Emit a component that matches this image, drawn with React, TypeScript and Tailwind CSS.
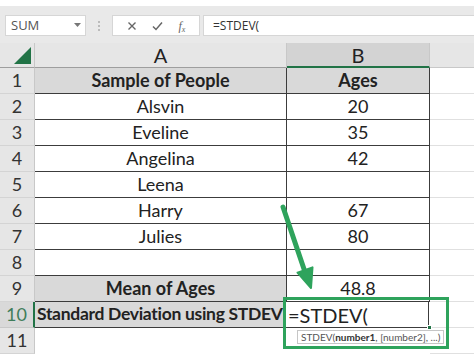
import React from "react";

type Row = {
  n: string;
  a: string;
  b: string;
  aBold?: boolean;
  bBold?: boolean;
  aGray?: boolean;
  bGray?: boolean;
  aLeft?: boolean;
  formula?: boolean;
  sel?: boolean;
  last?: boolean;
};

const rows: Row[] = [
  { n: "1", a: "Sample of People", b: "Ages", aBold: true, bBold: true, aGray: true, bGray: true },
  { n: "2", a: "Alsvin", b: "20" },
  { n: "3", a: "Eveline", b: "35" },
  { n: "4", a: "Angelina", b: "42" },
  { n: "5", a: "Leena", b: "" },
  { n: "6", a: "Harry", b: "67" },
  { n: "7", a: "Julies", b: "80" },
  { n: "8", a: "", b: "" },
  { n: "9", a: "Mean of Ages", b: "48.8", aBold: true, aGray: true },
  { n: "10", a: "Standard Deviation using STDEV", b: "=STDEV(", aBold: true, aGray: true, aLeft: true, formula: true, sel: true },
  { n: "11", a: "", b: "", last: true },
];

export default function App() {
  const font = { fontFamily: "Lato, 'Open Sans', sans-serif" };
  return (
    <div className="relative w-[474px] h-[354px] overflow-hidden bg-white text-[#222]" style={font}>
      {/* toolbar */}
      <div className="h-[6px] bg-white" />
      <div className="h-[37px] bg-[#e9e9e9] flex items-start pt-[9px]">
        <div className="ml-[5px] w-[81px] h-[21px] bg-white border border-[#d6d6d6] flex items-center justify-between pl-[5px] pr-[4px]">
          <span className="text-[13px] text-[#555]" style={{ fontFamily: "'Open Sans', sans-serif" }}>SUM</span>
          <svg width="7" height="5" viewBox="0 0 7 5"><path d="M0 0 L7 0 L3.5 4 Z" fill="#777" /></svg>
        </div>
        <div className="w-[26px] h-[21px] flex flex-col items-center justify-center gap-[2px]">
          <span className="w-[2px] h-[2px] bg-[#bbb]" />
          <span className="w-[2px] h-[2px] bg-[#bbb]" />
          <span className="w-[2px] h-[2px] bg-[#bbb]" />
        </div>
        <div className="w-[88px] h-[21px] bg-white border border-[#d6d6d6] flex items-center justify-around px-[6px]">
          <svg width="10" height="10" viewBox="0 0 10 10"><path d="M1.5 1.5 L8.5 8.5 M8.5 1.5 L1.5 8.5" stroke="#666" strokeWidth="1.4" /></svg>
          <svg width="11" height="10" viewBox="0 0 11 10"><path d="M1 5.5 L4 8.5 L10 1.5" stroke="#666" strokeWidth="1.5" fill="none" /></svg>
          <span className="text-[12px] italic text-[#666]" style={{ fontFamily: "'Liberation Serif', serif" }}>f<sub className="text-[8px]">x</sub></span>
        </div>
        <div className="ml-[3px] flex-1 h-[21px] bg-white border border-[#d6d6d6] border-r-0 flex items-center pl-[9px]">
          <span className="text-[12px] text-[#333]" style={{ fontFamily: "'Open Sans', sans-serif" }}>=STDEV(</span>
        </div>
      </div>

      {/* column header */}
      <div className="flex h-[25px]">
        <div className="w-[35px] bg-[#e6e6e6] border-r border-[#c8c8c8] border-b border-b-[#9e9e9e] relative">
          <svg className="absolute right-[3px] bottom-[3px]" width="17" height="17" viewBox="0 0 17 17"><path d="M17 0 L17 17 L0 17 Z" fill="#217346" /></svg>
        </div>
        <div className="w-[252px] bg-[#e6e6e6] border-r border-[#c8c8c8] border-b border-b-[#9e9e9e] flex items-center justify-center text-[20px] text-[#222]">A</div>
        <div className="w-[143px] bg-[#d3d3d3] border-b-2 border-[#217346] flex items-center justify-center text-[20px] text-[#222] border-r border-r-[#c8c8c8]">B</div>
        <div className="flex-1 bg-[#e6e6e6] border-b border-[#c8c8c8]" />
      </div>

      {/* rows */}
      {rows.map((r) => (
        <div key={r.n} className="flex h-[26px]">
          <div
            className={
              "w-[35px] flex items-center justify-center text-[18px] border-b " +
              (r.sel
                ? "bg-[#d9d9d9] text-[#3f7d5a] border-r-2 border-r-[#217346] border-b-[#c8c8c8]"
                : "bg-[#e6e6e6] text-[#333] border-r border-r-[#c8c8c8] border-b-[#d4d4d4]")
            }
          >
            {r.n}
          </div>
          <div
            className={
              "flex items-center overflow-hidden " +
              (r.sel ? "w-[251px] " : "w-[252px] ") +
              (r.last ? "" : "border-b border-r border-[#3c3c3c] ") +
              (r.aGray ? "bg-[#d9d9d9] " : "bg-white ") +
              (r.aBold ? "font-bold " : "") +
              (r.aLeft ? "justify-start pl-[2px] whitespace-nowrap text-[17.5px] tracking-[-0.3px]" : "justify-center text-[18px]")
            }
          >
            {r.a}
          </div>
          <div
            className={
              "w-[143px] flex items-center " +
              (r.last ? "" : "border-b border-r border-[#3c3c3c] ") +
              (r.bGray ? "bg-[#d9d9d9] " : "bg-white ") +
              (r.bBold ? "font-bold " : "") +
              (r.formula ? "justify-start pl-[2px] text-[20px]" : "justify-center text-[18px]")
            }
          >
            {r.b}
          </div>
          <div className="flex-1 border-b border-[#e0e0e0]" />
        </div>
      ))}

      {/* fill handle */}
      <div className="absolute left-[427px] top-[325px] w-[5px] h-[5px] bg-[#217346] border border-white" />

      {/* green highlight box */}
      <div className="absolute left-[283px] top-[297px] w-[166px] h-[52px] border-[3px] border-[#2ea35c]" />

      {/* tooltip */}
      <div
        className="absolute left-[297px] top-[330px] w-[147px] h-[14px] bg-white border border-[#c6c6c6] flex items-center pl-[3px] text-[10px] text-[#555] whitespace-nowrap"
        style={{ fontFamily: "Lato, sans-serif" }}
      >
        STDEV(<b className="text-[#333]">number1</b>, [number2], ...)
      </div>

      {/* arrow */}
      <svg className="absolute left-0 top-0" width="474" height="354" viewBox="0 0 474 354" style={{ pointerEvents: "none" }}>
        <line x1="283" y1="207" x2="305" y2="272" stroke="#2ea35c" strokeWidth="5" strokeLinecap="round" />
        <path d="M311 288 L297.5 272.6 L312.5 267.4 Z" fill="#2ea35c" stroke="#2ea35c" strokeWidth="2" strokeLinejoin="round" />
      </svg>
    </div>
  );
}
